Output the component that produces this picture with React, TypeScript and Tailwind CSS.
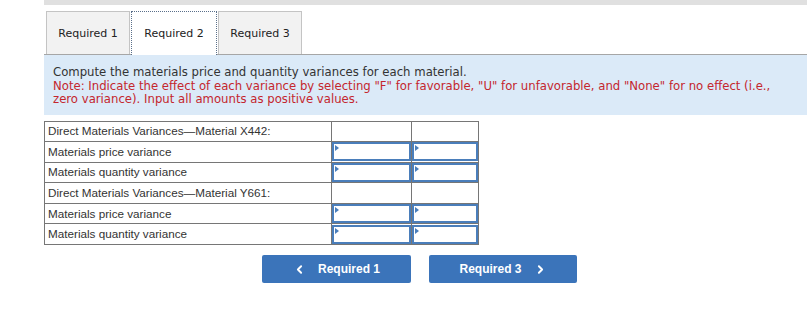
import React from 'react';
import { ChevronLeft, ChevronRight } from 'lucide-react';

// Tabs across the top of the question
const tabs = ['Required 1', 'Required 2', 'Required 3'];

// Rows of the variance table: header rows have no inputs
const rows = [
  { label: 'Direct Materials Variances\u2014Material X442:', input: false },
  { label: 'Materials price variance', input: true },
  { label: 'Materials quantity variance', input: true },
  { label: 'Direct Materials Variances\u2014Material Y661:', input: false },
  { label: 'Materials price variance', input: true },
  { label: 'Materials quantity variance', input: true },
];

const InputCell = () => (
  <td className="border border-[#767676] p-0">
    <div className="relative h-[19px] border-2 border-[#4a7ebb] bg-white">
      <span className="absolute left-[1px] top-[1px] w-0 h-0 border-y-[3px] border-y-transparent border-l-[4px] border-l-[#4a7ebb]" />
    </div>
  </td>
);

export default function App() {
  return (
    <div className="w-[807px] h-[310px] bg-white pl-[44px] overflow-hidden">
      {/* top gray strip */}
      <div className="h-[5px] bg-[#e0e0e0]" />

      {/* tabs */}
      <div className="flex items-end mt-[6px] pl-[2px] border-b border-[#a6a6a6] h-[44px] gap-[1px]">
        {tabs.map((t, i) =>
          i === 1 ? (
            <div
              key={t}
              className="w-[86px] h-[44px] -mb-px pt-[1px] bg-white border border-dotted border-[#5a6f8a] border-b-0 flex items-center justify-center text-[11px] text-[#222] font-['DejaVu_Sans',sans-serif]"
            >
              {t}
            </div>
          ) : (
            <div
              key={t}
              className="w-[84px] h-[43px] pt-[2px] bg-[#f2f2f2] border border-[#c4c4c4] border-b-0 flex items-center justify-center text-[11px] text-[#222] font-['DejaVu_Sans',sans-serif]"
            >
              {t}
            </div>
          )
        )}
      </div>

      {/* instructions */}
      <div className="bg-[#dbeaf8] pl-[9px] pt-[11px] pb-[8px] text-[11.7px] leading-[13.5px] font-['DejaVu_Sans',sans-serif]">
        <p className="text-[#333]">Compute the materials price and quantity variances for each material.</p>
        <p className="text-[#c4262e]">
          Note: Indicate the effect of each variance by selecting "F" for favorable, "U" for unfavorable, and "None" for no effect (i.e.,
          <br />
          zero variance). Input all amounts as positive values.
        </p>
      </div>

      {/* variance table */}
      <table className="mt-[6px] border-collapse text-[11.7px] text-[#333] font-['Liberation_Sans',Arial,sans-serif]">
        <tbody>
          {rows.map((r, i) => (
            <tr key={i} className="h-[20.6px]">
              <td className="w-[287px] border border-[#767676] px-[3px] py-0 leading-[18px]">{r.label}</td>
              {r.input ? (
                <>
                  <InputCell />
                  <InputCell />
                </>
              ) : (
                <>
                  <td className="w-[80px] border border-[#767676]" />
                  <td className="w-[67px] border border-[#767676]" />
                </>
              )}
            </tr>
          ))}
        </tbody>
      </table>

      {/* navigation buttons */}
      <div className="flex gap-[18px] ml-[218px] mt-[10px] font-['Liberation_Sans',Arial,sans-serif]">
        <button className="w-[149px] h-[28px] bg-[#3b74ba] rounded-[2px] text-white text-[12px] font-bold flex items-center justify-center gap-[12px]">
          <ChevronLeft size={13} strokeWidth={3.5} />
          <span>Required 1</span>
        </button>
        <button className="w-[148px] h-[28px] bg-[#3b74ba] rounded-[2px] text-white text-[12px] font-bold flex items-center justify-center gap-[12px]">
          <span>Required 3</span>
          <ChevronRight size={13} strokeWidth={3.5} />
        </button>
      </div>
    </div>
  );
}
